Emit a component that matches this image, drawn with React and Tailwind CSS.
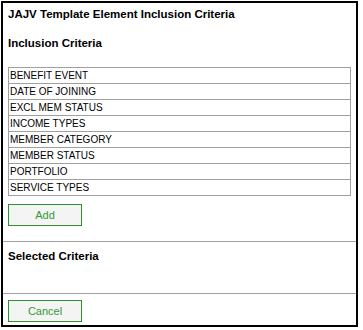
const criteria = [
  'BENEFIT EVENT',
  'DATE OF JOINING',
  'EXCL MEM STATUS',
  'INCOME TYPES',
  'MEMBER CATEGORY',
  'MEMBER STATUS',
  'PORTFOLIO',
  'SERVICE TYPES',
];

function GreenButton({ children }) {
  return (
    <button
      type="button"
      className="w-[74px] h-[22px] flex items-center justify-center border border-[#2f8f2f] bg-[#f4f4f4] text-[11px] text-[#339933] leading-none"
    >
      {children}
    </button>
  );
}

export default function App() {
  return (
    <div className="w-[363px] h-[330px] bg-white pt-[1px] pl-[1px] font-['Liberation_Sans',Arial,sans-serif] text-black">
      <div className="w-[357px] h-[326px] border-2 border-black flex flex-col">
        {/* Header */}
        <h1 className="mt-[5px] pl-[5px] text-[11.5px] leading-[13px] font-bold">
          JAJV Template Element Inclusion Criteria
        </h1>

        <h2 className="mt-[16px] pl-[5px] text-[11.5px] leading-[13px] font-bold">
          Inclusion Criteria
        </h2>

        {/* Criteria list */}
        <div className="mt-[17px] ml-[5px] w-[343px] border-t border-x border-[#a0a0a0]">
          {criteria.map((c) => (
            <div
              key={c}
              className="h-[16px] border-b border-[#a0a0a0] pl-[1px] text-[10px] leading-[15px]"
            >
              {c}
            </div>
          ))}
        </div>

        <div className="mt-[8px] pl-[5px] flex">
          <GreenButton>Add</GreenButton>
        </div>

        <div className="mt-[15px] border-t border-[#a0a0a0]" />

        <h2 className="mt-[8px] pl-[5px] text-[11.5px] leading-[13px] font-bold">
          Selected Criteria
        </h2>

        <div className="mt-[30px] border-t border-[#a0a0a0]" />

        <div className="mt-[6px] pl-[5px] flex">
          <GreenButton>Cancel</GreenButton>
        </div>
      </div>
    </div>
  );
}
